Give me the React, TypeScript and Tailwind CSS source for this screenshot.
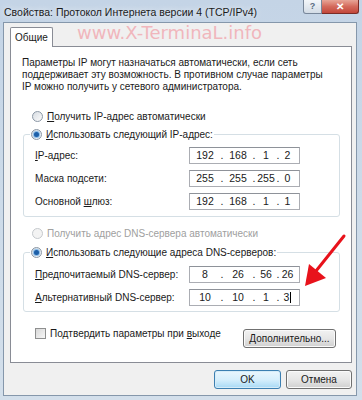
import React from 'react';

const font = "font-['Liberation_Sans',Arial,sans-serif]";

function Radio({ checked, disabled }: { checked?: boolean; disabled?: boolean }) {
  return (
    <span
      className={
        disabled
          ? 'flex h-[11px] w-[11px] shrink-0 items-center justify-center rounded-full border border-[#c5c9cd] bg-[#f3f3f3]'
          : 'flex h-[11px] w-[11px] shrink-0 items-center justify-center rounded-full border border-[#8b97a5] bg-gradient-to-br from-[#d7dce2] to-[#fbfbfb]'
      }
    >
      {checked && <span className="h-[5px] w-[5px] rounded-full bg-[#1d5fa8] shadow-[0_0_1px_1px_#7fb6e8]" />}
    </span>
  );
}

function U({ children }: { children: React.ReactNode }) {
  return <span className="underline decoration-1 underline-offset-[1px]">{children}</span>;
}

function IpBox({ parts, cursor }: { parts: string[]; cursor?: boolean }) {
  return (
    <div className="flex h-[17px] w-[111px] items-center border border-[#abadb3] border-t-[#8e9299] bg-white text-[10.5px] leading-none text-[#1a1a1a]">
      <span className="w-[30px] text-center">{parts[0]}</span>
      <span className="w-[4px] text-center">.</span>
      <span className="w-[28px] text-center">{parts[1]}</span>
      <span className="w-[4px] text-center">.</span>
      <span className="w-[20px] text-center">{parts[2]}</span>
      <span className="w-[4px] text-center">.</span>
      <span className="flex w-[15px] items-center justify-center">
        {parts[3]}
        {cursor && <span className="ml-px h-[11px] w-px bg-black" />}
      </span>
    </div>
  );
}

function Row({ label, parts, cursor }: { label: React.ReactNode; parts: string[]; cursor?: boolean }) {
  return (
    <div className="flex h-[17px] items-center">
      <span className="w-[154px] whitespace-nowrap">{label}</span>
      <IpBox parts={parts} cursor={cursor} />
    </div>
  );
}

function Button({ children, primary, className }: { children: React.ReactNode; primary?: boolean; className?: string }) {
  return (
    <div
      className={
        (primary
          ? 'border-[#3c7fb1] bg-gradient-to-b from-[#eaf6fd] via-[#d7effc] to-[#a7d9f5] shadow-[inset_0_0_0_1px_#d6ecf8] '
          : 'border-[#707070] bg-gradient-to-b from-[#f2f2f2] via-[#e6e6e6] to-[#d0d0d0] shadow-[inset_0_0_0_1px_#fafafa] ') +
        'flex items-center justify-center whitespace-nowrap rounded-[3px] border text-[10px] text-[#1a1a1a] ' +
        (className ?? '')
      }
    >
      {children}
    </div>
  );
}

export default function App() {
  return (
    <div className={`relative flex h-[400px] w-[362px] flex-col bg-gradient-to-b from-[#c4d4e6] via-[#cddbe9] to-[#d3dfeb] ${font}`}>
      {/* title bar */}
      <div className="flex h-[22px] shrink-0 items-start">
        <span className="ml-[4px] mt-[5px] whitespace-nowrap text-[10.5px] leading-[14px] text-[#1b1b1b] [text-shadow:0_0_6px_#ffffff]">
          Свойства: Протокол Интернета версии 4 (TCP/IPv4)
        </span>
        <div className="ml-auto mr-[3px] flex">
          <div className="flex h-[14px] w-[19px] items-center justify-center rounded-bl-[3px] border border-t-0 border-[#78879a] bg-gradient-to-b from-[#f3f6f9] to-[#d3dce6] text-[9px] font-bold text-[#5a6b80]">
            ?
          </div>
          <div className="flex h-[14px] w-[37px] items-center justify-center rounded-br-[3px] border border-l-0 border-t-0 border-[#7a2c26] bg-gradient-to-b from-[#e7a597] via-[#d46a5c] to-[#c2463a] text-[10px] font-bold text-white">
            ✕
          </div>
        </div>
      </div>

      {/* dialog body */}
      <div className="mb-[4px] ml-[3px] mr-[5px] flex flex-1 flex-col border border-[#8597ab] bg-[#f0f0f0] text-[10px]">
        {/* tab */}
        <div className="relative z-10 -mb-px ml-[6px] mt-[4px] flex h-[20px] w-[43px] items-center justify-center rounded-t-[2px] border border-b-0 border-[#898c95] bg-white text-[#1a1a1a]">
          Общие
        </div>

        {/* panel */}
        <div className="ml-[6px] flex h-[317px] w-[342px] flex-col border border-[#898c95] bg-white text-[#1a1a1a]">
          <p className="ml-[11px] mt-[10px] whitespace-nowrap leading-[12px]">
            Параметры IP могут назначаться автоматически, если сеть
            <br />
            поддерживает эту возможность. В противном случае параметры
            <br />
            IP можно получить у сетевого администратора.
          </p>

          <div className="ml-[21px] mt-[17px] flex h-[13px] items-center gap-[4px]">
            <Radio />
            <span>
              <U>П</U>олучить IP-адрес автоматически
            </span>
          </div>

          <fieldset className="ml-[12px] mt-[5px] w-[317px] rounded-[3px] border border-[#d5dfe5] pb-[6px] pl-[11px]">
            <legend className="ml-[-5px] flex h-[13px] items-center gap-[4px] bg-white px-[1px]">
              <Radio checked />
              <span>
                <U>И</U>спользовать следующий IP-адрес:
              </span>
            </legend>
            <div className="mt-[6px] flex flex-col gap-[6px]">
              <Row label={<><U>I</U>P-адрес:</>} parts={['192', '168', '1', '2']} />
              <Row label={<>Маска подсети:</>} parts={['255', '255', '255', '0']} />
              <Row label={<>Основной <U>ш</U>люз:</>} parts={['192', '168', '1', '1']} />
            </div>
          </fieldset>

          <div className="ml-[21px] mt-[10px] flex h-[13px] items-center gap-[4px] text-[#a0a0a0]">
            <Radio disabled />
            <span>Получить адрес DNS-сервера автоматически</span>
          </div>

          <fieldset className="ml-[12px] mt-[6px] w-[317px] rounded-[3px] border border-[#d5dfe5] pb-[5px] pl-[11px]">
            <legend className="ml-[-5px] flex h-[13px] items-center gap-[4px] bg-white px-[1px]">
              <Radio checked />
              <span>
                <U>И</U>спользовать следующие адреса DNS-серверов:
              </span>
            </legend>
            <div className="mt-[7px] flex flex-col gap-[6px]">
              <Row label={<><U>П</U>редпочитаемый DNS-сервер:</>} parts={['8', '26', '56', '26']} />
              <Row label={<><U>А</U>льтернативный DNS-сервер:</>} parts={['10', '10', '1', '3']} cursor />
            </div>
          </fieldset>

          <div className="ml-[24px] mr-[15px] mt-[15px] flex items-start justify-between">
            <div className="flex h-[13px] items-center gap-[4px]">
              <span className="h-[11px] w-[11px] border border-[#8e8f8f] bg-gradient-to-br from-[#d8d8d8] to-[#f7f7f7]" />
              <span>
                Подтвердить параметры при <U>в</U>ыходе
              </span>
            </div>
            <Button className="mt-[2px] h-[19px] w-[93px]">
              <span>
                <U>Д</U>ополнительно...
              </span>
            </Button>
          </div>
        </div>

        {/* bottom buttons */}
        <div className="mr-[4px] mt-[7px] flex justify-end gap-[5px]">
          <Button primary className="h-[19px] w-[67px]">
            OK
          </Button>
          <Button className="h-[19px] w-[66px]">Отмена</Button>
        </div>
      </div>

      {/* watermark */}
      <span className="pointer-events-none absolute left-[77px] top-[22px] font-['DejaVu_Sans',sans-serif] text-[18px] leading-[22px] text-[#f0909b] opacity-60">
        www.X-TerminaL.info
      </span>

      {/* red arrow */}
      <svg className="pointer-events-none absolute left-0 top-0" width="362" height="400" viewBox="0 0 362 400">
        <line x1="344" y1="236" x2="316" y2="271" stroke="#e8121b" strokeWidth="3" strokeLinecap="round" />
        <polygon points="305,286 309,264 326,278" fill="#e8121b" />
      </svg>
    </div>
  );
}
